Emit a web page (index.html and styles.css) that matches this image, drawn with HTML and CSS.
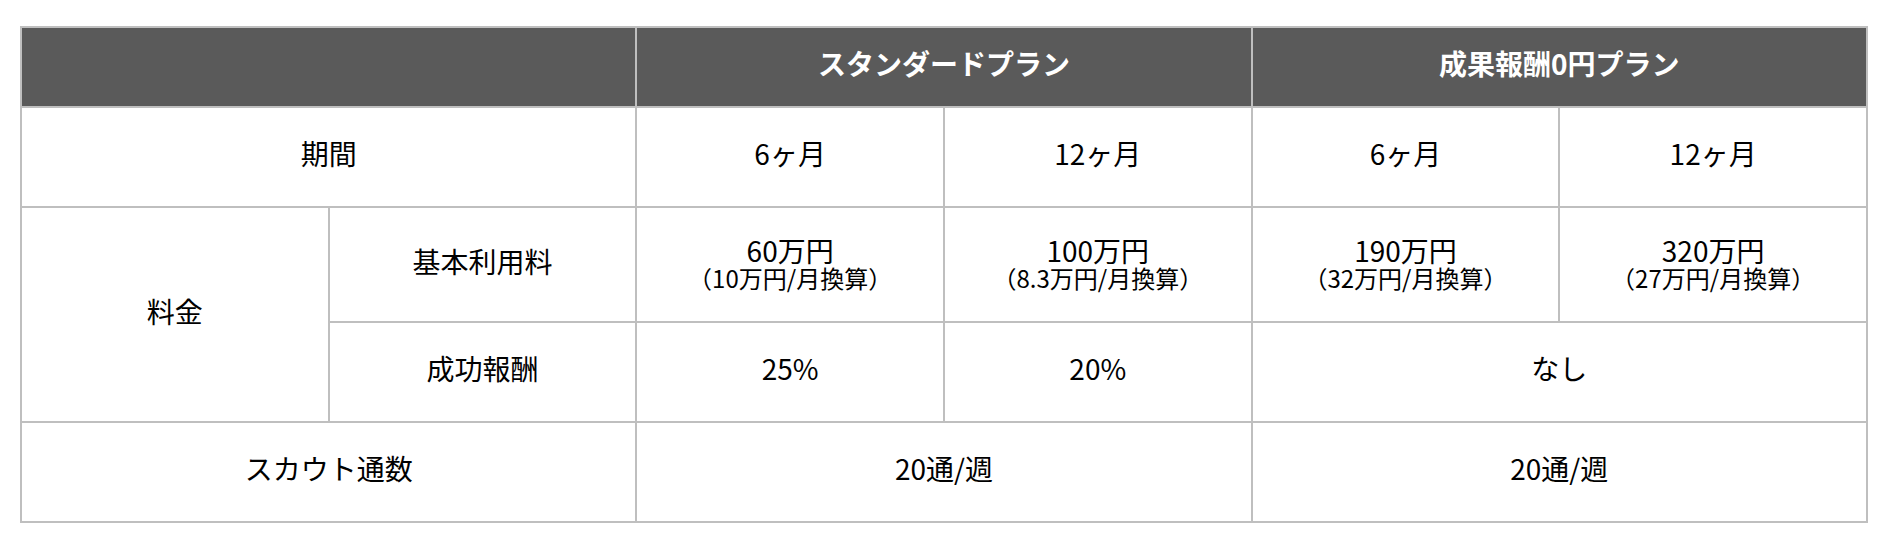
FILE: index.html
```html
<!DOCTYPE html>
<html lang="ja">
<head>
<meta charset="utf-8">
<link rel="stylesheet" href="styles.css">
</head>
<body>
<div class="wrap">
<table class="plans">
  <colgroup>
    <col><col><col><col><col><col>
  </colgroup>
  <thead>
    <tr class="head">
      <th colspan="2"></th>
      <th colspan="2">スタンダードプラン</th>
      <th colspan="2">成果報酬0円プラン</th>
    </tr>
  </thead>
  <tbody>
    <tr class="r-period">
      <td colspan="2">期間</td>
      <td>6ヶ月</td>
      <td>12ヶ月</td>
      <td>6ヶ月</td>
      <td>12ヶ月</td>
    </tr>
    <tr class="r-base">
      <td rowspan="2">料金</td>
      <td>基本利用料</td>
      <td><div class="price">60万円</div><div class="sub">（10万円/月換算）</div></td>
      <td><div class="price">100万円</div><div class="sub">（8.3万円/月換算）</div></td>
      <td><div class="price">190万円</div><div class="sub">（32万円/月換算）</div></td>
      <td><div class="price">320万円</div><div class="sub">（27万円/月換算）</div></td>
    </tr>
    <tr class="r-fee">
      <td>成功報酬</td>
      <td>25%</td>
      <td>20%</td>
      <td colspan="2">なし</td>
    </tr>
    <tr class="r-scout">
      <td colspan="2">スカウト通数</td>
      <td colspan="2">20通/週</td>
      <td colspan="2">20通/週</td>
    </tr>
  </tbody>
</table>
</div>
</body>
</html>
```
FILE: styles.css
```css
html, body {
  margin: 0;
  padding: 0;
  background: #ffffff;
}

.wrap {
  padding: 26px 0 0 20px;
}

.plans {
  border-collapse: collapse;
  table-layout: fixed;
  width: 1848px;
  font-family: "Noto Sans CJK JP", "Noto Sans", sans-serif;
  color: #000000;
}

.plans th,
.plans td {
  border: 2px solid #bfbfbf;
  text-align: center;
  vertical-align: middle;
  padding: 0 0 6px 0;
  font-size: 28px;
  font-weight: 400;
  line-height: 1.2;
}

.plans .head th {
  background: #5a5a5a;
  color: #ffffff;
  font-weight: 700;
  font-size: 28px;
  height: 72px;
}

.r-period td { height: 92px; }
.r-base td { height: 107px; }
.r-fee td { height: 92px; }
.r-scout td { height: 92px; }

.price {
  font-size: 28px;
  line-height: 32px;
}

.sub {
  font-size: 24px;
  line-height: 24px;
}
```
